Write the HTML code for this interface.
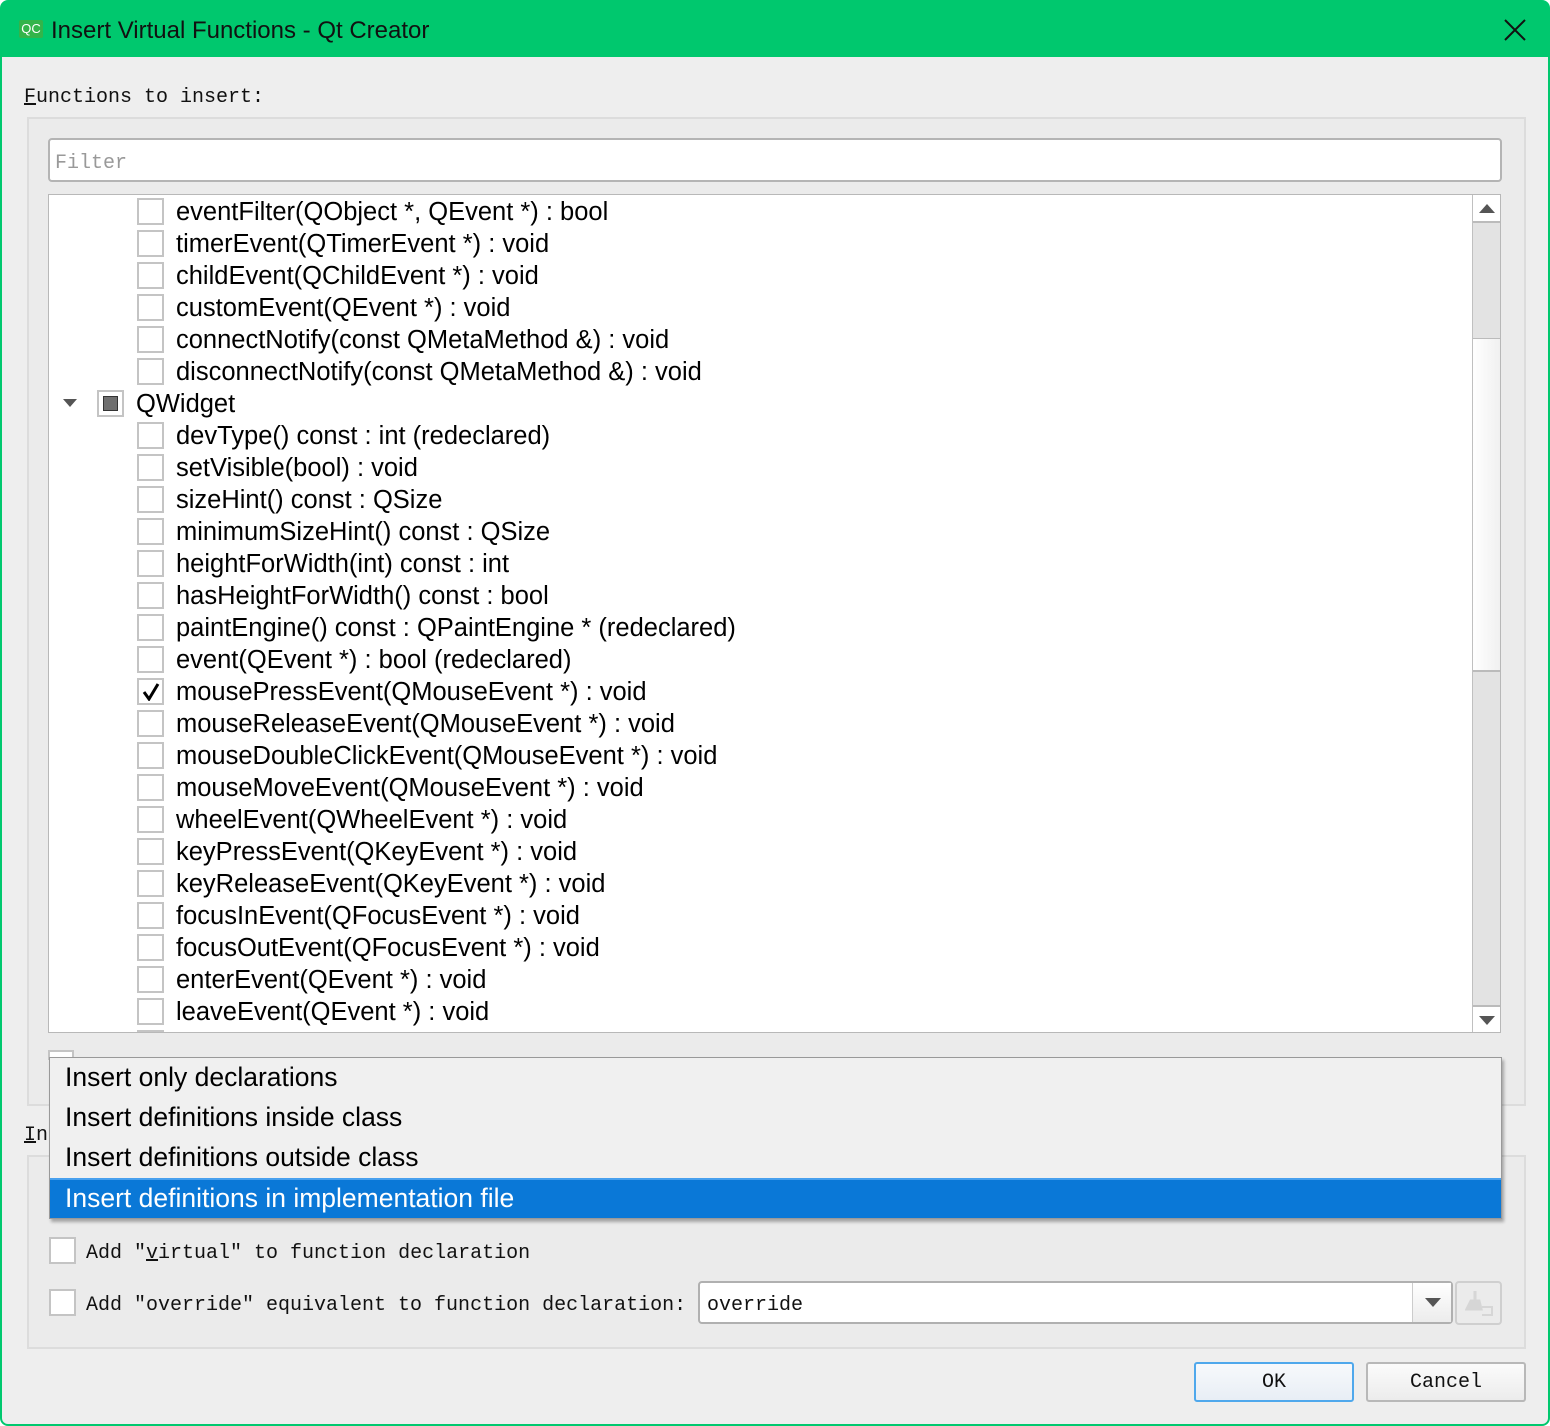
<!DOCTYPE html>
<html><head><meta charset="utf-8"><style>
*{box-sizing:border-box;margin:0;padding:0}
body{width:1550px;height:1426px;background:#fff;position:relative;overflow:hidden;font-family:"Liberation Sans","Noto Sans CJK SC",sans-serif}
.win{position:absolute;left:0;top:0;width:1550px;height:1426px;background:#00c86e;border-radius:8px 8px 8px 8px}
.body{position:absolute;left:2px;top:57px;width:1546px;height:1367px;background:#eeeeee;border-radius:0 0 6px 6px}
.abs{position:absolute}
.mono{font-family:"Liberation Mono","Noto Sans CJK SC",monospace;font-size:20px;color:#111}
.grp{position:absolute;border:2px solid #dcdcdc;background:#ebebeb}
.cb{position:absolute;width:27px;height:27px;border:2px solid #c4c4c4;background:#fff}
.row{position:absolute;left:0;height:32px;font-size:25.5px;color:#000;white-space:nowrap}
.row .cb{left:88px;top:2px}
.row span{position:absolute;left:127px;top:1px;line-height:30px}
.pop div{height:40px;line-height:39px;padding-left:15px;font-size:26.5px;white-space:nowrap}
.btn{position:absolute;border:2px solid #b8b8b8;border-radius:3px;background:linear-gradient(#fbfbfb,#ececec);text-align:center;line-height:34px}
</style></head><body>
<div class="win"></div>
<div class="abs" style="left:19px;top:20px;width:24px;height:18px;background:#33b44a;color:#fff;font-size:13px;line-height:18px;text-align:center;border-radius:2px">QC</div>
<div class="abs" style="left:51px;top:17px;font-size:24px;color:#111">Insert Virtual Functions - Qt Creator</div>
<svg class="abs" style="left:1504px;top:19px" width="22" height="22"><path d="M1 1L21 21M21 1L1 21" stroke="#111" stroke-width="2"/></svg>
<div class="body"></div>
<div class="abs mono" style="left:24px;top:86px"><u>F</u>unctions to insert:</div>
<div class="grp" style="left:27px;top:117px;width:1499px;height:989px"></div>
<div class="abs mono" style="left:48px;top:138px;width:1454px;height:44px;background:#fff;border:2px solid #b4b4b4;border-radius:4px;color:#999;padding:12px 0 0 5px">Filter</div>
<div class="abs" style="left:48px;top:194px;width:1453px;height:839px;background:#fff;border:1px solid #b8b8b8;overflow:hidden">
<div style="position:absolute;left:0;top:0;width:1424px;height:839px;overflow:hidden">
<div class="row" style="top:1px"><div class="cb"></div><span>eventFilter(QObject *, QEvent *) : bool</span></div>
<div class="row" style="top:33px"><div class="cb"></div><span>timerEvent(QTimerEvent *) : void</span></div>
<div class="row" style="top:65px"><div class="cb"></div><span>childEvent(QChildEvent *) : void</span></div>
<div class="row" style="top:97px"><div class="cb"></div><span>customEvent(QEvent *) : void</span></div>
<div class="row" style="top:129px"><div class="cb"></div><span>connectNotify(const QMetaMethod &amp;) : void</span></div>
<div class="row" style="top:161px"><div class="cb"></div><span>disconnectNotify(const QMetaMethod &amp;) : void</span></div>
<div class="row" style="top:193px"><svg style="position:absolute;left:14px;top:11px" width="14" height="8"><path d="M0 0H14L7 8Z" fill="#555"/></svg><div class="cb" style="left:48px"><div style="position:absolute;left:4px;top:4px;width:15px;height:15px;background:#6f6f6f;border:1px solid #333"></div></div><span style="left:87px">QWidget</span></div>
<div class="row" style="top:225px"><div class="cb"></div><span>devType() const : int (redeclared)</span></div>
<div class="row" style="top:257px"><div class="cb"></div><span>setVisible(bool) : void</span></div>
<div class="row" style="top:289px"><div class="cb"></div><span>sizeHint() const : QSize</span></div>
<div class="row" style="top:321px"><div class="cb"></div><span>minimumSizeHint() const : QSize</span></div>
<div class="row" style="top:353px"><div class="cb"></div><span>heightForWidth(int) const : int</span></div>
<div class="row" style="top:385px"><div class="cb"></div><span>hasHeightForWidth() const : bool</span></div>
<div class="row" style="top:417px"><div class="cb"></div><span>paintEngine() const : QPaintEngine * (redeclared)</span></div>
<div class="row" style="top:449px"><div class="cb"></div><span>event(QEvent *) : bool (redeclared)</span></div>
<div class="row" style="top:481px"><div class="cb"><svg style="position:absolute;left:3px;top:3px" width="18" height="18"><path d="M2 9L7 16L16 1" stroke="#000" stroke-width="3" fill="none"/></svg></div><span>mousePressEvent(QMouseEvent *) : void</span></div>
<div class="row" style="top:513px"><div class="cb"></div><span>mouseReleaseEvent(QMouseEvent *) : void</span></div>
<div class="row" style="top:545px"><div class="cb"></div><span>mouseDoubleClickEvent(QMouseEvent *) : void</span></div>
<div class="row" style="top:577px"><div class="cb"></div><span>mouseMoveEvent(QMouseEvent *) : void</span></div>
<div class="row" style="top:609px"><div class="cb"></div><span>wheelEvent(QWheelEvent *) : void</span></div>
<div class="row" style="top:641px"><div class="cb"></div><span>keyPressEvent(QKeyEvent *) : void</span></div>
<div class="row" style="top:673px"><div class="cb"></div><span>keyReleaseEvent(QKeyEvent *) : void</span></div>
<div class="row" style="top:705px"><div class="cb"></div><span>focusInEvent(QFocusEvent *) : void</span></div>
<div class="row" style="top:737px"><div class="cb"></div><span>focusOutEvent(QFocusEvent *) : void</span></div>
<div class="row" style="top:769px"><div class="cb"></div><span>enterEvent(QEvent *) : void</span></div>
<div class="row" style="top:801px"><div class="cb"></div><span>leaveEvent(QEvent *) : void</span></div>
<div class="row" style="top:833px"><div class="cb"></div></div>
</div>
<div style="position:absolute;left:1423px;top:0;width:28px;height:839px;border-left:1px solid #c0c0c0;background:#e3e3e3">
<div style="position:absolute;left:0;top:0;width:27px;height:28px;background:#fff;border-bottom:2px solid #bbb"><svg style="position:absolute;left:6px;top:9px" width="16" height="9"><path d="M0 9H16L8 0Z" fill="#555"/></svg></div>
<div style="position:absolute;left:0;top:143px;width:27px;height:334px;background:linear-gradient(90deg,#fff,#f0f0f0);border-top:1px solid #bbb;border-bottom:2px solid #bbb"></div>
<div style="position:absolute;left:0;bottom:0;width:27px;height:29px;background:#fff;border-top:2px solid #bbb"><svg style="position:absolute;left:6px;top:9px" width="16" height="9"><path d="M0 0H16L8 9Z" fill="#555"/></svg></div>
</div>
</div>
<div class="abs" style="left:48px;top:1050px;width:26px;height:10px;border:2px solid #c4c4c4;background:#fff"></div>
<div class="abs mono" style="left:24px;top:1124px"><u>I</u>n</div>
<div class="grp" style="left:27px;top:1155px;width:1499px;height:194px"></div>
<div class="abs pop" style="left:49px;top:1057px;width:1453px;height:162px;background:#f0f0f0;border:1px solid #999;box-shadow:2px 3px 3px rgba(0,0,0,.3);color:#000">
<div>Insert only declarations</div><div>Insert definitions inside class</div><div>Insert definitions outside class</div>
<div style="background:#0a78d7;color:#fff;border-top:2px solid #48a0ee;line-height:37px">Insert definitions in implementation file</div>
</div>
<div class="cb" style="left:49px;top:1237px"></div>
<div class="abs mono" style="left:86px;top:1242px">Add ″<u>v</u>irtual″ to function declaration</div>
<div class="cb" style="left:49px;top:1289px"></div>
<div class="abs mono" style="left:86px;top:1294px">Add ″override″ equivalent to function declaration:</div>
<div class="abs mono" style="left:698px;top:1281px;width:755px;height:43px;background:#fff;border:2px solid #b0b0b0;border-radius:4px;padding:11px 0 0 7px">override
<div style="position:absolute;right:0;top:0;width:39px;height:39px;border-left:1px solid #ccc;background:linear-gradient(#fff,#ececec)"><svg style="position:absolute;left:12px;top:15px" width="16" height="9"><path d="M0 0H16L8 9Z" fill="#555"/></svg></div></div>
<div class="abs" style="left:1455px;top:1281px;width:47px;height:44px;border:2px solid #cfcfcf;border-radius:4px;background:#ebebeb">
<svg style="position:absolute;left:8px;top:6px" width="30" height="30"><path d="M10 2V12M6 12H14L16 20H2Z" stroke="#d6d6d6" stroke-width="3" fill="#d6d6d6"/><path d="M17 18H27V26H17" stroke="#d6d6d6" stroke-width="2" fill="none"/></svg></div>
<div class="btn mono" style="left:1194px;top:1362px;width:160px;height:40px;border-color:#4fa8ec;background:linear-gradient(#f7f9fc,#e8eef5);line-height:38px">OK</div>
<div class="btn mono" style="left:1366px;top:1362px;width:160px;height:40px;line-height:38px">Cancel</div>
</body></html>
